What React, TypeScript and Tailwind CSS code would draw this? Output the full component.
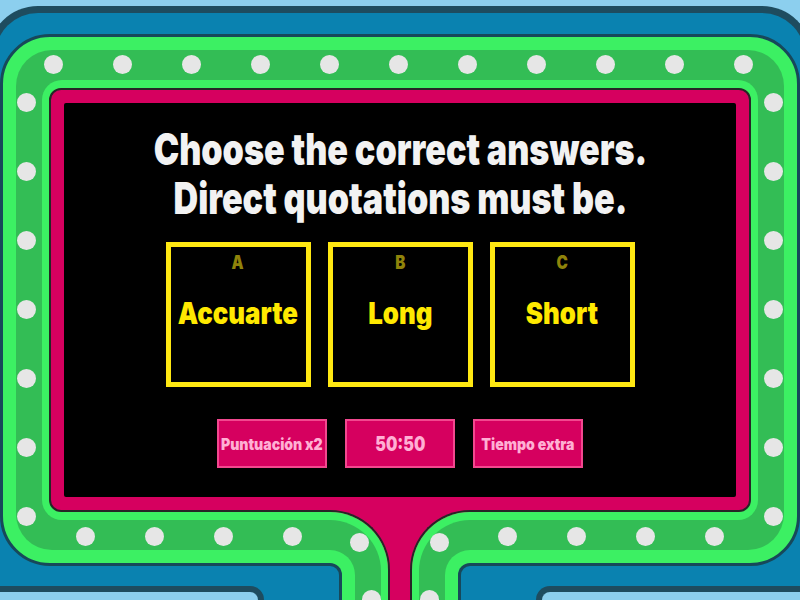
const font = "font-['Inter','Roboto',sans-serif]";
const dot = 'w-[19px] h-[19px] rounded-full bg-[#e6e6e6] shrink-0';

function Dots({ count }: { count: number }) {
  return (
    <>
      {Array.from({ length: count }).map((_, i) => (
        <div key={i} className={dot} />
      ))}
    </>
  );
}

function AnswerBox({ letter, text }: { letter: string; text: string }) {
  return (
    <div className="w-[145px] h-[145px] border-[5px] border-[#ffe812] flex flex-col items-center">
      <div className="pt-[6px] text-[19px] leading-[20px] font-black text-[#8f830a] scale-x-[0.8]">{letter}</div>
      <div className="mt-[23px] text-[30px] leading-[34px] font-black text-[#ffe900] whitespace-nowrap scale-x-[0.86]">
        {text}
      </div>
    </div>
  );
}

function PowerButton({ label, big }: { label: string; big?: boolean }) {
  return (
    <div className="w-[110px] h-[49px] bg-[#d6005f] border-2 border-[#f2488f] text-[#ffb0d4] font-black flex items-center justify-center whitespace-nowrap">
      <span className={big ? 'text-[20px] scale-x-[0.8]' : 'text-[16px] scale-x-[0.88]'}>{label}</span>
    </div>
  );
}

export default function App() {
  return (
    <div className={`relative w-[800px] h-[600px] overflow-hidden bg-[#8ccfee] pt-[6px] ${font}`}>
      {/* outer blue board */}
      <div className="ml-[-12px] w-[824px] h-[620px] border-t-[7px] border-x-[7px] border-[#1e4c5f] rounded-t-[50px] bg-[#0a82b0] pt-[21px] px-[5px]">
        {/* green light frame */}
        <div className="border-[3px] border-[#17485a] rounded-[50px] bg-[#3cf063] p-[13px]">
          <div className="relative rounded-[36px] bg-[#33bd55] pt-[30px] pb-[30px] px-[26px]">
            {/* bulbs */}
            <div className="absolute top-[5px] left-[28px] flex gap-[50px]">
              <Dots count={11} />
            </div>
            <div className="absolute top-[43px] left-[1px] flex flex-col gap-[50px]">
              <Dots count={7} />
            </div>
            <div className="absolute top-[43px] right-[1px] flex flex-col gap-[50px]">
              <Dots count={7} />
            </div>
            <div className="absolute bottom-[4px] left-[60px] flex gap-[50px]">
              <Dots count={4} />
            </div>
            <div className="absolute bottom-[4px] right-[60px] flex gap-[50px]">
              <Dots count={4} />
            </div>

            <div className="rounded-[20px] bg-[#3cf063] pt-[8px] pb-[8px] px-[7px]">
              <div className="rounded-[12px] border-2 border-[#262626] bg-[#d6005f] p-[13px]">
                {/* screen */}
                <div className="w-[672px] h-[394px] bg-black rounded-[2px] flex flex-col items-center pt-[22px]">
                  <h1 className="text-[#f2f2f2] text-[44px] leading-[49px] font-black text-center whitespace-nowrap scale-x-[0.775]">
                    Choose the correct answers.
                    <br />
                    Direct quotations must be.
                  </h1>
                  <div className="mt-[19px] flex gap-[17px]">
                    <AnswerBox letter="A" text="Accuarte" />
                    <AnswerBox letter="B" text="Long" />
                    <AnswerBox letter="C" text="Short" />
                  </div>
                  <div className="mt-[32px] flex gap-[18px]">
                    <PowerButton label="Puntuación x2" />
                    <PowerButton label="50:50" big />
                    <PowerButton label="Tiempo extra" />
                  </div>
                </div>
              </div>
            </div>
          </div>
        </div>
      </div>

      {/* stem going down from the screen */}
      <div className="absolute left-[310px] top-[510px] w-[180px] h-[90px] bg-[#d6005f] flex justify-between">
        <div className="w-[80px] h-full border-t-2 border-r-2 border-[#262626] rounded-tr-[60px] overflow-hidden flex flex-col">
          <div className="flex-1 flex flex-col bg-[#3cf063] pt-[8px] pr-[7px]">
            <div className="relative flex-1 flex flex-col bg-[#33bd55] pt-[30px] pr-[26px] rounded-tr-[51px]">
              <div className="flex-1 flex flex-col bg-[#3cf063] pt-[13px] pr-[13px] rounded-tr-[25px]">
                <div className="flex-1 flex flex-col bg-[#17485a] pt-[3px] pr-[3px] rounded-tr-[12px]">
                  <div className="flex-1 bg-[#0a82b0] rounded-tr-[9px]" />
                </div>
              </div>
              <div className={`absolute left-[40px] top-[13px] ${dot}`} />
              <div className={`absolute left-[52px] top-[70px] ${dot}`} />
            </div>
          </div>
        </div>
        <div className="w-[80px] h-full border-t-2 border-l-2 border-[#262626] rounded-tl-[60px] overflow-hidden flex flex-col">
          <div className="flex-1 flex flex-col bg-[#3cf063] pt-[8px] pl-[7px]">
            <div className="relative flex-1 flex flex-col bg-[#33bd55] pt-[30px] pl-[26px] rounded-tl-[51px]">
              <div className="flex-1 flex flex-col bg-[#3cf063] pt-[13px] pl-[13px] rounded-tl-[25px]">
                <div className="flex-1 flex flex-col bg-[#17485a] pt-[3px] pl-[3px] rounded-tl-[12px]">
                  <div className="flex-1 bg-[#0a82b0] rounded-tl-[9px]" />
                </div>
              </div>
              <div className={`absolute left-[11px] top-[13px] ${dot}`} />
              <div className={`absolute left-[1px] top-[70px] ${dot}`} />
            </div>
          </div>
        </div>
      </div>

      {/* sky showing under the board */}
      <div className="absolute left-0 top-[586px] w-[264px] h-[20px] bg-[#8ccfee] border-t-[6px] border-r-[6px] border-[#1e4c5f] rounded-tr-[14px]" />
      <div className="absolute left-[536px] top-[586px] w-[264px] h-[20px] bg-[#8ccfee] border-t-[6px] border-l-[6px] border-[#1e4c5f] rounded-tl-[14px]" />
    </div>
  );
}
